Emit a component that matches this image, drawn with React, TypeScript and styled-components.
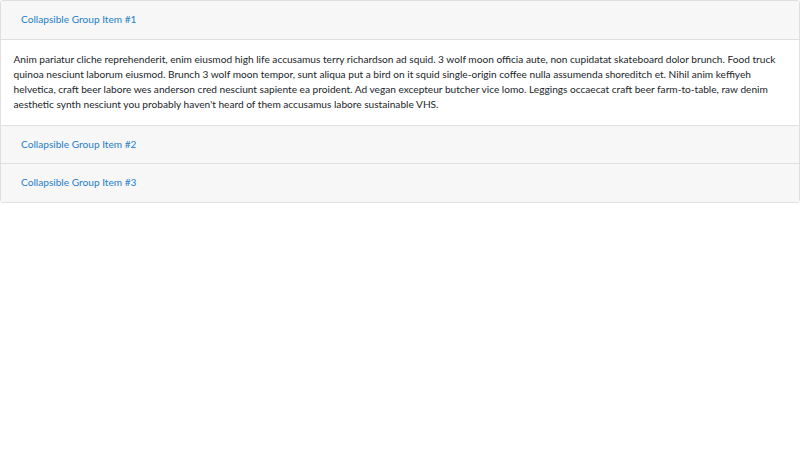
import React, { useState } from 'react';
import styled, { createGlobalStyle } from 'styled-components';

const GlobalStyle = createGlobalStyle`
  body {
    margin: 0;
    background: #fff;
    font-family: Lato, "Open Sans", sans-serif;
    font-size: 10.15px;
    line-height: 15px;
    color: #212529;
  }
`;

const Accordion = styled.div`
  border: 1px solid #dfdfdf;
  border-radius: 3px;
  overflow: hidden;
`;

const Card = styled.div`
  & + & {
    border-top: 1px solid #dfdfdf;
  }
`;

const CardHeader = styled.div`
  background: #f7f7f7;
  padding: 7.5px 12.5px;
  display: flex;
  align-items: center;
`;

const ToggleButton = styled.button`
  border: 0;
  background: transparent;
  padding: 3.75px 7.5px;
  font-family: inherit;
  font-size: 10.15px;
  line-height: 15px;
  color: #1e7ec8;
  cursor: pointer;
`;

const CardBody = styled.div`
  border-top: 1px solid #dfdfdf;
  padding: 12.5px;
`;

const bodyText =
  "Anim pariatur cliche reprehenderit, enim eiusmod high life accusamus terry richardson ad squid. 3 wolf moon officia aute, non cupidatat skateboard dolor brunch. Food truck quinoa nesciunt laborum eiusmod. Brunch 3 wolf moon tempor, sunt aliqua put a bird on it squid single-origin coffee nulla assumenda shoreditch et. Nihil anim keffiyeh helvetica, craft beer labore wes anderson cred nesciunt sapiente ea proident. Ad vegan excepteur butcher vice lomo. Leggings occaecat craft beer farm-to-table, raw denim aesthetic synth nesciunt you probably haven't heard of them accusamus labore sustainable VHS.";

const items = [1, 2, 3];

export default function App() {
  const [open, setOpen] = useState<number | null>(1);

  return (
    <>
      <GlobalStyle />
      <Accordion>
        {items.map((n) => (
          <Card key={n}>
            <CardHeader>
              <ToggleButton onClick={() => setOpen(open === n ? null : n)}>
                Collapsible Group Item #{n}
              </ToggleButton>
            </CardHeader>
            {open === n && <CardBody>{bodyText}</CardBody>}
          </Card>
        ))}
      </Accordion>
    </>
  );
}
